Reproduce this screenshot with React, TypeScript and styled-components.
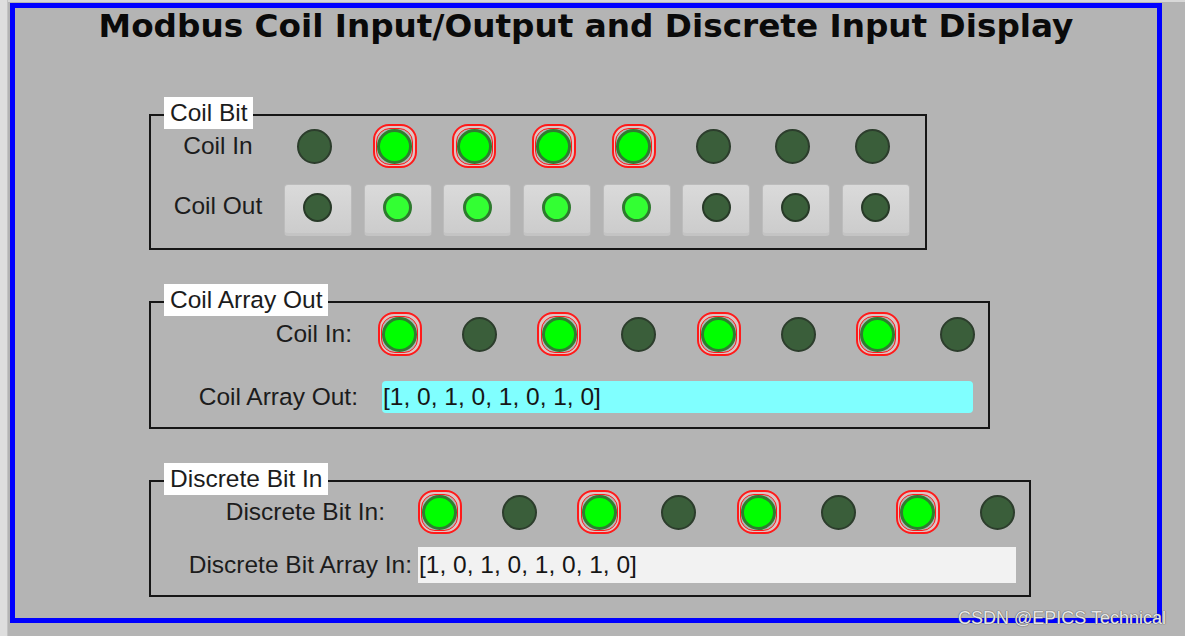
import styled, { createGlobalStyle } from "styled-components";

const GlobalStyle = createGlobalStyle`
  html, body {
    margin: 0;
    padding: 0;
    background: #b4b4b4;
    font-family: "Liberation Sans", Arial, sans-serif;
  }
`;

const Page = styled.div`
  position: relative;
  display: flex;
  flex-direction: row;
  width: 1185px;
  height: 636px;
  overflow: hidden;
  background: #b4b4b4;
`;

const Gutter = styled.div`
  width: 7px;
  flex: none;
  background: #dedede;
  border-right: 1px solid #c4c4c4;
`;

const Canvas = styled.div`
  flex: 1;
  border-top: 2px solid #d8d8d8;
  padding: 1px 0 0 2px;
`;

const Frame = styled.div`
  box-sizing: border-box;
  width: 1152px;
  height: 620px;
  border: 5px solid #0000ff;
  display: flex;
  flex-direction: column;
`;

const Title = styled.h1`
  margin: 0;
  height: 34px;
  padding-top: 1px;
  line-height: 34px;
  font-family: "DejaVu Sans", "Liberation Sans", sans-serif;
  font-size: 32.7px;
  font-weight: 700;
  text-align: center;
  color: #0a0a0a;
`;

const Group = styled.div<{ $width: number; $top: number }>`
  position: relative;
  box-sizing: border-box;
  width: ${(p) => p.$width}px;
  margin: ${(p) => p.$top}px 0 0 134px;
  border: 2px solid #161616;
  display: flex;
  flex-direction: column;
`;

const Legend = styled.div`
  position: absolute;
  left: 13px;
  top: -19px;
  height: 32px;
  line-height: 32px;
  padding: 0 5px 0 6px;
  background: #ffffff;
  font-size: 24.5px;
  color: #1c1c1c;
`;

const Row = styled.div<{ $height: number; $gap: number; $pad?: number }>`
  display: flex;
  align-items: center;
  height: ${(p) => p.$height}px;
  gap: ${(p) => p.$gap}px;
  padding-left: ${(p) => p.$pad ?? 0}px;
`;

const Label = styled.div<{ $width: number; $align?: "center" | "right"; $lift?: number }>`
  width: ${(p) => p.$width}px;
  flex: none;
  text-align: ${(p) => p.$align ?? "right"};
  font-size: 24.5px;
  color: #1c1c1c;
  white-space: nowrap;
  padding-bottom: ${(p) => p.$lift ?? 0}px;
`;

const Cells = styled.div`
  display: flex;
`;

const Cell = styled.div`
  width: 79.7px;
  display: flex;
  justify-content: center;
  align-items: center;
`;

// double red alarm outline drawn around an active indicator
const AlarmOuter = styled.div`
  padding: 1.5px;
  border: 2px solid #ff1a1a;
  border-radius: 16px;
  background: #dcc6c6;
`;

const AlarmInner = styled.div`
  display: flex;
  border: 1.5px solid #ff1a1a;
  border-radius: 14px;
  background: #b4b4b4;
`;

const Led = styled.div<{ $on: boolean }>`
  box-sizing: border-box;
  width: 35px;
  height: 35px;
  border-radius: 50%;
  background: ${(p) => (p.$on ? "#00ff00" : "#3a5e3a")};
  border: ${(p) => (p.$on ? "3.5px solid #2f7d2f" : "2.5px solid #2c3d2c")};
`;

const ToggleButton = styled.div`
  box-sizing: border-box;
  width: 68px;
  height: 52px;
  display: flex;
  justify-content: center;
  align-items: center;
  padding-bottom: 3px;
  border: 1px solid #bcbcbc;
  border-bottom: 3px solid #c4c4c4;
  border-radius: 4px;
  background: linear-gradient(#dadada, #cccccc);
`;

const ButtonLed = styled.div<{ $on: boolean }>`
  box-sizing: border-box;
  width: 29px;
  height: 29px;
  border-radius: 50%;
  background: ${(p) => (p.$on ? "#33ff33" : "#3a5f3a")};
  border: ${(p) => (p.$on ? "3px solid #2e7a2e" : "2.5px solid #283a28")};
`;

const ValueField = styled.div<{ $width: number; $height: number; $bg: string; $radius: number }>`
  box-sizing: border-box;
  width: ${(p) => p.$width}px;
  height: ${(p) => p.$height}px;
  line-height: ${(p) => p.$height}px;
  padding-left: 1px;
  background: ${(p) => p.$bg};
  border-radius: ${(p) => p.$radius}px;
  font-size: 24.5px;
  color: #161616;
  white-space: nowrap;
`;

const Watermark = styled.div`
  position: absolute;
  left: 958px;
  top: 608px;
  font-size: 18px;
  color: rgba(250, 250, 250, 0.9);
  text-shadow: 0 0 1px #555, 0 0 1px #555;
`;

const coilIn = [0, 1, 1, 1, 1, 0, 0, 0];
const coilOut = [0, 1, 1, 1, 1, 0, 0, 0];
const arrayBits = [1, 0, 1, 0, 1, 0, 1, 0];

const Indicator = ({ on }: { on: boolean }) =>
  on ? (
    <AlarmOuter>
      <AlarmInner>
        <Led $on />
      </AlarmInner>
    </AlarmOuter>
  ) : (
    <Led $on={false} />
  );

const LedRow = ({ bits }: { bits: number[] }) => (
  <Cells>
    {bits.map((b, i) => (
      <Cell key={i}>
        <Indicator on={b === 1} />
      </Cell>
    ))}
  </Cells>
);

const arrayText = `[${arrayBits.join(", ")}]`;

export default function App() {
  return (
    <Page>
      <GlobalStyle />
      <Gutter />
      <Canvas>
        <Frame>
          <Title>Modbus Coil Input/Output and Discrete Input Display</Title>

          <Group $width={778} $top={71}>
            <Legend>Coil Bit</Legend>
            <Row $height={44} $gap={10} $pad={20} style={{ marginTop: 8 }}>
              <Label $width={94} $align="center">
                Coil In
              </Label>
              <LedRow bits={coilIn} />
            </Row>
            <Row $height={52} $gap={13} $pad={20} style={{ margin: "16px 0 12px" }}>
              <Label $width={94} $align="center" $lift={8}>
                Coil Out
              </Label>
              <Cells>
                {coilOut.map((b, i) => (
                  <Cell key={i}>
                    <ToggleButton>
                      <ButtonLed $on={b === 1} />
                    </ToggleButton>
                  </Cell>
                ))}
              </Cells>
            </Row>
          </Group>

          <Group $width={841} $top={51}>
            <Legend>Coil Array Out</Legend>
            <Row $height={44} $gap={8} style={{ marginTop: 9 }}>
              <Label $width={201}>Coil In:</Label>
              <LedRow bits={arrayBits} />
            </Row>
            <Row $height={32} $gap={24} style={{ margin: "25px 0 14px" }}>
              <Label $width={207}>Coil Array Out:</Label>
              <ValueField $width={591} $height={32} $bg="#80ffff" $radius={4}>
                {arrayText}
              </ValueField>
            </Row>
          </Group>

          <Group $width={882} $top={51}>
            <Legend>Discrete Bit In</Legend>
            <Row $height={44} $gap={15} style={{ marginTop: 8 }}>
              <Label $width={234}>Discrete Bit In:</Label>
              <LedRow bits={arrayBits} />
            </Row>
            <Row $height={36} $gap={6} style={{ margin: "13px 0 12px" }}>
              <Label $width={261}>Discrete Bit Array In:</Label>
              <ValueField $width={598} $height={36} $bg="#f2f2f2" $radius={0}>
                {arrayText}
              </ValueField>
            </Row>
          </Group>
        </Frame>
      </Canvas>
      <Watermark>CSDN @EPICS Technical</Watermark>
    </Page>
  );
}
